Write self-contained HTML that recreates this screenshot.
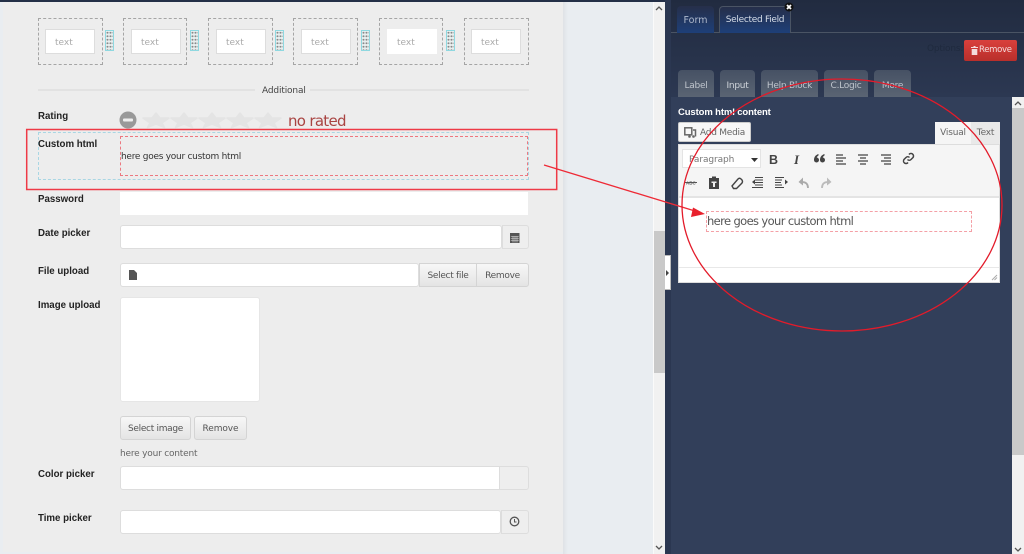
<!DOCTYPE html>
<html><head><meta charset="utf-8">
<style>
*{box-sizing:border-box}
html,body{margin:0;padding:0;width:1024px;height:554px;overflow:hidden;background:#e9edf1;font-family:"DejaVu Sans","Liberation Sans",sans-serif}
.a{position:absolute}
.box{position:absolute;top:18px;height:47px;border:1px dashed #a5a5a5}
.inp{position:absolute;top:29px;width:50px;height:25px;background:#fff;border:1px solid #ddd;color:#aaa;font-size:9px;line-height:26px;padding-left:9px}
.hd{position:absolute;top:30px;width:9px;height:21px;border:1px solid #8fd8e0;background:radial-gradient(circle,#888 0.8px,transparent 1.1px) 0 0/3px 3.5px #e8eeee}
.lb{position:absolute;left:38px;font:bold 9.700px/13px "Liberation Sans",sans-serif;color:#222;white-space:nowrap}
.f{position:absolute;background:#fff;border:1px solid #ddd;border-radius:3px}
.ad{position:absolute;background:#eee;border:1px solid #ddd;border-radius:0 3px 3px 0}
.btn{position:absolute;background:linear-gradient(#f7f7f7,#e4e4e4);border:1px solid #d4d4d4;border-radius:3px;color:#555;font-size:9px;text-align:center;letter-spacing:-.3px;white-space:nowrap}
.t2{position:absolute;top:70px;height:27px;background:linear-gradient(#465164,#5a6473);border-radius:4px 4px 0 0;color:#bfc4cc;font-size:9px;line-height:32px;text-align:center;letter-spacing:-.25px;white-space:nowrap}
svg{position:absolute;overflow:visible}
</style></head><body>
<div class="a" style="left:0;top:0;width:1024px;height:2px;background:#232f47"></div>
<div class="a" style="left:3px;top:2px;width:560px;height:550px;background:#ededed"></div>
<div class="a" style="left:563px;top:2px;width:5px;height:552px;background:linear-gradient(90deg,#dfe2e6,#e9edf1)"></div>
<div class="a" style="left:653px;top:2px;width:12px;height:552px;background:#f1f1f1;border-left:1px solid #fafafa"></div>
<div class="a" style="left:654px;top:231px;width:11px;height:142px;background:#c9c9c9"></div>
<svg style="left:0;top:0" width="1" height="1"><path d="M656 10l3-3 3 3M656 546l3 3 3-3" fill="none" stroke="#555" stroke-width="1.3"/></svg>

<div class="box" style="left:38px;width:65px"></div><div class="inp" style="left:45px">text</div><div class="hd" style="left:105px"></div>
<div class="box" style="left:123px;width:64px"></div><div class="inp" style="left:131px">text</div><div class="hd" style="left:190px"></div>
<div class="box" style="left:208px;width:65px"></div><div class="inp" style="left:216px">text</div><div class="hd" style="left:275px"></div>
<div class="box" style="left:293px;width:65px"></div><div class="inp" style="left:301px">text</div><div class="hd" style="left:361px"></div>
<div class="box" style="left:379px;width:64px"></div><div class="inp" style="left:387px;border-color:#fff">text</div><div class="hd" style="left:446px"></div>
<div class="box" style="left:464px;width:65px"></div><div class="inp" style="left:471px">text</div>

<div class="a" style="left:38px;top:89px;width:217px;height:2px;background:#e2e2e2"></div>
<div class="a" style="left:262px;top:85px;font-size:9px;line-height:12px;color:#444;letter-spacing:-.15px">Additional</div>
<div class="a" style="left:310px;top:89px;width:219px;height:2px;background:#e2e2e2"></div>

<div class="lb" style="top:110px">Rating</div>
<svg style="left:0;top:0" width="1" height="1">
<circle cx="128" cy="120" r="8.500" fill="#999"/><rect x="123" y="118.500" width="10" height="3" rx="1" fill="#eee"/>
<g fill="#e4e4e4" stroke="#e4e4e4" stroke-width="1.500" stroke-linejoin="round">
<path d="M156 113l4 5h9l-7 5 2.500 4.500-8.500-3.500-8.500 3.500 2.500-4.500-7-5h9z"/>
<path d="M184 113l4 5h9l-7 5 2.500 4.500-8.500-3.500-8.500 3.500 2.500-4.500-7-5h9z"/>
<path d="M212 113l4 5h9l-7 5 2.500 4.500-8.500-3.500-8.500 3.500 2.500-4.500-7-5h9z"/>
<path d="M240 113l4 5h9l-7 5 2.500 4.500-8.500-3.500-8.500 3.500 2.500-4.500-7-5h9z"/>
<path d="M268 113l4 5h9l-7 5 2.500 4.500-8.500-3.500-8.500 3.500 2.500-4.500-7-5h9z"/>
</g>
</svg>
<div class="a" style="left:288px;top:112px;font:15px/19px 'DejaVu Sans',sans-serif;color:#a94442;letter-spacing:-.7px;white-space:nowrap">no rated</div>

<div class="a" style="left:38px;top:132px;width:491px;height:48px;border:1px dashed #a9d6e3"></div>
<div class="a" style="left:120px;top:136px;width:408px;height:40px;border:1px dashed #ec7880"></div>
<div class="lb" style="top:138px">Custom html</div>
<div class="a" style="left:121px;top:151px;font-size:9px;line-height:13px;color:#333;letter-spacing:-.27px;white-space:nowrap">here goes your custom html</div>

<div class="lb" style="top:193px">Password</div>
<div class="a" style="left:120px;top:192px;width:408px;height:23px;background:#fff"></div>
<div class="lb" style="top:227px">Date picker</div>
<div class="f" style="left:120px;top:225px;width:382px;height:24px"></div>
<div class="ad" style="left:502px;top:225px;width:27px;height:24px"></div>
<svg style="left:510px;top:232px" width="10" height="11"><path d="M0 1h9.500v10H0z" fill="#555"/><path d="M.8 4.500h8M.8 6.500h8M.8 8.500h8M3 4v6.500M5 4v6.500M7 4v6.500" stroke="#ddd" stroke-width=".6"/></svg>
<div class="lb" style="top:265px">File upload</div>
<div class="f" style="left:120px;top:263px;width:299px;height:24px"></div>
<svg style="left:129px;top:270px" width="9" height="10"><path d="M0 0h5l3 3v7H0z" fill="#555"/></svg>
<div class="btn" style="left:419px;top:263px;width:58px;height:24px;line-height:24px;border-radius:0">Select file</div>
<div class="btn" style="left:476px;top:263px;width:53px;height:24px;line-height:24px;border-radius:0 3px 3px 0">Remove</div>
<div class="lb" style="top:299px">Image upload</div>
<div class="a" style="left:120px;top:297px;width:140px;height:105px;background:#fff;border:1px solid #e6e6e6;border-radius:3px"></div>
<div class="btn" style="left:120px;top:416px;width:71px;height:24px;line-height:25px">Select image</div>
<div class="btn" style="left:194px;top:416px;width:53px;height:24px;line-height:25px;letter-spacing:-.1px">Remove</div>
<div class="a" style="left:120px;top:447px;font-size:9px;line-height:14px;color:#666;letter-spacing:-.2px;white-space:nowrap">here your content</div>
<div class="lb" style="top:468px">Color picker</div>
<div class="f" style="left:120px;top:466px;width:380px;height:24px;border-radius:3px 0 0 3px"></div>
<div class="ad" style="left:499px;top:466px;width:30px;height:24px"></div>
<div class="lb" style="top:512px">Time picker</div>
<div class="f" style="left:120px;top:510px;width:381px;height:24px"></div>
<div class="ad" style="left:501px;top:510px;width:28px;height:24px"></div>
<svg style="left:509px;top:516px" width="11" height="11"><circle cx="5.500" cy="5.500" r="4.300" fill="none" stroke="#555" stroke-width="1.300"/><path d="M5.500 3v3h2" fill="none" stroke="#555"/></svg>

<!-- right panel -->
<div class="a" style="left:665px;top:0;width:359px;height:554px;background:#2b3751"></div>
<div class="a" style="left:671px;top:0;width:353px;height:97px;background:linear-gradient(#212b40,#2c3852)"></div>
<div class="a" style="left:671px;top:32px;width:353px;height:1px;background:#4a5464"></div>
<div class="a" style="left:677px;top:6px;width:37px;height:27px;background:linear-gradient(#262f4a,#1e3f78);border-radius:4px 4px 0 0;color:#aeb9cc;font-size:9.500px;line-height:30px;text-align:center">Form</div>
<div class="a" style="left:719px;top:6px;width:72px;height:27px;background:linear-gradient(#262f4a,#1e3f78);border:1px solid #4a5464;border-bottom:0;border-radius:4px 4px 0 0;color:#d6dde8;font-size:9px;line-height:27px;text-align:center;letter-spacing:-.3px;white-space:nowrap">Selected Field</div>
<svg style="left:784px;top:2px" width="10" height="10"><circle cx="5" cy="5" r="4.500" fill="#111"/><path d="M3 3l4 4M7 3l-4 4" stroke="#fff" stroke-width="1.800"/></svg>
<div class="a" style="left:927px;top:43px;font-size:9px;line-height:13px;color:#1f2a3e;letter-spacing:-.2px">Options:</div>
<div class="a" style="left:964px;top:40px;width:53px;height:21px;background:linear-gradient(#d9403c,#b92f2b);border-radius:2px;color:#f4dcdc;font-size:8.500px;line-height:21px;padding-left:15px;letter-spacing:-.3px;white-space:nowrap">Remove</div>
<svg style="left:971px;top:46px" width="7" height="9"><path d="M2.500 1V0h2v1H7v1H0V1zM.7 3h5.600v6H.7z" fill="#f4dcdc"/></svg>

<div class="t2" style="left:678px;width:36px">Label</div>
<div class="t2" style="left:720px;width:35px;color:#d0d4da">Input</div>
<div class="t2" style="left:761px;width:57px">Help Block</div>
<div class="t2" style="left:824px;width:44px">C.Logic</div>
<div class="t2" style="left:874px;width:37px">More</div>

<div class="a" style="left:671px;top:97px;width:341px;height:457px;background:#323f5a"></div>
<div class="a" style="left:1012px;top:97px;width:12px;height:457px;background:#f1f1f1"></div>
<div class="a" style="left:1012px;top:108px;width:12px;height:347px;background:#c9c9c9"></div>
<svg style="left:0;top:0" width="1" height="1"><path d="M1015 105l3-3 3 3M1015 548l3 3 3-3" fill="none" stroke="#555" stroke-width="1.300"/></svg>
<div class="a" style="left:665px;top:255px;width:6px;height:35px;background:#fff;border:1px solid #bbb;border-left:0"></div>
<svg style="left:666px;top:270px" width="4" height="6"><path d="M0 0l3 3-3 3z" fill="#444"/></svg>

<div class="a" style="left:678px;top:106px;font:bold 9.500px/13px 'Liberation Sans',sans-serif;color:#fff;letter-spacing:-.12px;white-space:nowrap">Custom html content</div>
<div class="a" style="left:678px;top:122px;width:73px;height:20px;background:#f7f7f7;border:1px solid #ccc;border-radius:2px;color:#666;font-size:9px;line-height:20px;padding-left:21px;letter-spacing:-.25px;white-space:nowrap">Add Media</div>
<svg style="left:684px;top:127px" width="12" height="11"><rect x=".8" y=".8" width="7" height="7" fill="none" stroke="#666" stroke-width="1.500"/><path d="M9 3h2.500v6.500" fill="none" stroke="#666" stroke-width="1.500"/><circle cx="5.500" cy="9.500" r="1.300" fill="#666"/><circle cx="9.500" cy="9.500" r="1.300" fill="#666"/></svg>
<div class="a" style="left:935px;top:122px;width:36px;height:22px;background:#f5f5f5;color:#666;font-size:9px;line-height:22px;text-align:center;letter-spacing:-.2px">Visual</div>
<div class="a" style="left:971px;top:122px;width:29px;height:22px;background:#e9e9e9;color:#666;font-size:9px;line-height:22px;text-align:center;letter-spacing:-.2px">Text</div>

<div class="a" style="left:678px;top:144px;width:322px;height:139px;background:#fff;border:1px solid #ddd"></div>
<div class="a" style="left:679px;top:145px;width:320px;height:53px;background:#f5f5f5;border-bottom:2px solid #e4e4e4"></div>
<div class="a" style="left:682px;top:149px;width:79px;height:19px;background:#fff;border:1px solid #e4e4e4;color:#777;font-size:9px;line-height:20px;padding-left:6px;letter-spacing:-.1px">Paragraph</div>
<svg style="left:0;top:0" width="1" height="1">
<path d="M751 158h7l-3.500 4z" fill="#333"/>
<text x="769" y="164" font-family="Liberation Sans,sans-serif" font-size="12.500" font-weight="bold" fill="#444">B</text>
<text x="794" y="164" font-family="Liberation Serif,serif" font-size="13" font-weight="bold" font-style="italic" fill="#444">I</text>
<circle cx="816.500" cy="160" r="2.500" fill="#444"/><circle cx="822.500" cy="160" r="2.500" fill="#444"/>
<path d="M814 160c0-3 1.500-5 4.500-6v1.500c-1.500.8-2 2-2 4.500zM820 160c0-3 1.500-5 4.500-6v1.500c-1.500.8-2 2-2 4.500z" fill="#444"/>
<path d="M836 155h7M836 158h10M836 161h7M836 164h10M858 155h10M860 158h6M858 161h10M860 164h6M881 155h10M884 158h7M881 161h10M884 164h7" stroke="#444" stroke-width="1.300"/>
<path d="M909 154.500a2.500 2.500 0 0 1 4 3l-2 2a2.500 2.500 0 0 1-3.500 0M908 162.500a2.500 2.500 0 0 1-4-3l2-2a2.500 2.500 0 0 1 3.500 0" fill="none" stroke="#444" stroke-width="1.500"/>
<text x="686" y="184.500" font-family="Liberation Sans,sans-serif" font-size="4.500" font-weight="bold" fill="#555">ABC</text><path d="M685 182.500h12" stroke="#555"/>
<path d="M709 178h3v-1.500h4v1.500h3v11h-10z" fill="#444"/><path d="M711.500 181.500h5v1.500h-1.500v4h-2v-4h-1.500z" fill="#eee"/>
<path d="M732 186l6-7q1.500-1.500 3 0l1 1q1 1.500 0 3l-5.500 5.500h-3z" fill="none" stroke="#444" stroke-width="1.400"/>
<path d="M755 177.500h8M755 180h8M755 182.500h8M755 185h8M752 187.500h11" stroke="#444" stroke-width="1.100"/><path d="M755 179.500l-3 2.500 3 2.500z" fill="#444"/>
<path d="M775 177.500h9M775 180h7M775 182.500h6M775 185h7M775 187.500h9" stroke="#444" stroke-width="1.100"/><path d="M785 179.500l3 2.500-3 2.500z" fill="#444"/>
<path d="M808 188c0-4-2-6-6-6" fill="none" stroke="#aaa" stroke-width="1.800"/><path d="M803 177.500l-4.500 4.500 4.500 3.500z" fill="#aaa"/>
<path d="M822 188c0-4 2-6 6-6" fill="none" stroke="#bbb" stroke-width="1.800"/><path d="M827 177.500l4.500 4.500-4.500 3.500z" fill="#bbb"/>
</svg>
<div class="a" style="left:706px;top:211px;width:266px;height:21px;border:1px dashed #f4a0a6"></div>
<div class="a" style="left:707px;top:213px;font:11.500px/16px 'DejaVu Sans',sans-serif;color:#555;letter-spacing:-.62px;white-space:nowrap">here goes your custom html</div>
<div class="a" style="left:679px;top:267px;width:320px;height:1px;background:#e8e8e8"></div>
<svg style="left:991px;top:274px" width="7" height="7"><path d="M1 6l5-5M3.500 6l2.500-2.500" stroke="#aaa"/></svg>

<!-- annotations -->
<svg style="left:0;top:0" width="1024" height="554">
<rect x="26.700" y="129.500" width="530" height="60" fill="none" stroke="#ee3a46" stroke-width="1.500"/>
<path d="M544 165L695 211" stroke="#ee2a36" stroke-width="1.300"/>
<path d="M705 214L693 207.500 691 217z" fill="#e8202c"/>
<ellipse cx="842" cy="205" rx="160" ry="126" fill="none" stroke="#e31b2a" stroke-width="1.300"/>
</svg>
</body></html>
